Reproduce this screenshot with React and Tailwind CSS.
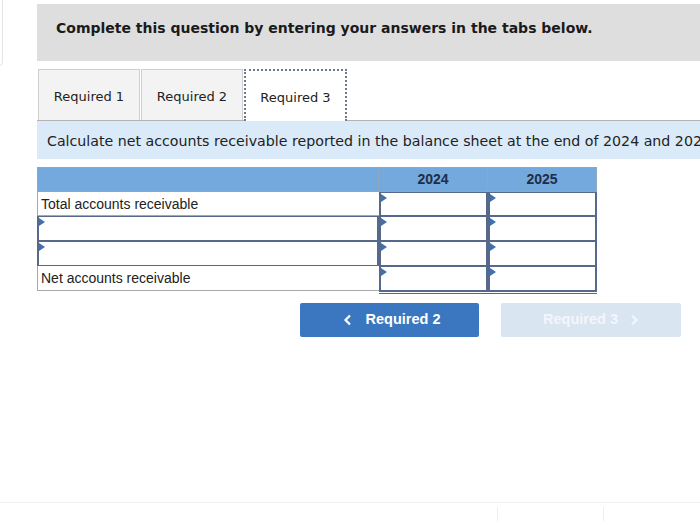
import React from "react";

const Marker = () => (
  <span className="absolute left-0 top-[1px] w-0 h-0 border-t-[4px] border-b-[4px] border-l-[6px] border-t-transparent border-b-transparent border-l-[#3f71b0]" />
);

const InputCell = ({ w }) => (
  <div className={`relative h-full ${w} border-x-2 border-y-[1.5px] border-[#56698a] bg-white`}>
    <Marker />
  </div>
);

export default function App() {
  const sans = { fontFamily: '"DejaVu Sans", Verdana, sans-serif' };
  const arial = { fontFamily: '"Liberation Sans", Arial, sans-serif' };
  return (
    <div className="relative w-[700px] h-[523px] bg-white overflow-hidden">
      <div className="absolute left-[-6px] top-[-6px] w-[9px] h-[72px] border border-[#e4e4e4] rounded-[4px]" />
      <div className="absolute left-0 right-0 top-[502px] border-t border-[#f3f3f3]" />
      <div className="absolute left-[497px] top-[507px] h-[14px] border-l border-[#eeeeee]" />
      <div className="absolute left-[603px] top-[507px] h-[14px] border-l border-[#eeeeee]" />

      <div className="pl-[37px] pt-[4px]">
        <div className="h-[57px] bg-[#dedede] flex items-center pl-[19px] pb-[9px]">
          <span className="text-[14px] font-bold text-[#1a1a1a]" style={sans}>
            Complete this question by entering your answers in the tabs below.
          </span>
        </div>

        <div className="mt-[8px] flex items-end h-[52px] border-b border-[#b3b3b3] pl-[1px] gap-[1px]" style={sans}>
          <div className="w-[102px] h-[51px] bg-[#f3f3f3] border border-b-0 border-[#cfcfcf] flex items-center justify-center pt-[4px] text-[13px] text-[#222]">
            Required 1
          </div>
          <div className="w-[102px] h-[51px] bg-[#f3f3f3] border border-b-0 border-[#cfcfcf] flex items-center justify-center pt-[4px] text-[13px] text-[#222]">
            Required 2
          </div>
          <div className="w-[103px] h-[52px] bg-white border-2 border-b-0 border-dotted border-[#6c7a8c] flex items-center justify-center pt-[3px] text-[13px] text-[#222] mb-[-1px]">
            Required 3
          </div>
        </div>

        <div className="h-[38px] bg-[#dbeaf8] flex items-center pl-[10px] pt-[3px] overflow-hidden whitespace-nowrap">
          <span className="text-[14.2px] text-[#222]" style={sans}>
            Calculate net accounts receivable reported in the balance sheet at the end of 2024 and 2025.
          </span>
        </div>

        <div className="mt-[8px] w-[560px]" style={arial}>
          <div className="flex h-[25px] bg-[#74a9de] border border-[#8fa6c0]">
            <div className="w-[341px] border-r border-[#8fa6c0]" />
            <div className="w-[109px] border-r border-[#8fa6c0] flex items-center justify-center text-[14px] font-bold text-[#1e2d48]">2024</div>
            <div className="flex-1 flex items-center justify-center text-[14px] font-bold text-[#1e2d48]">2025</div>
          </div>

          <div className="flex h-[24px]">
            <div className="w-[342px] border-l border-b border-[#a9a9a9] flex items-center pl-[3px] pt-[1px] text-[14px] text-[#222]">
              Total accounts receivable
            </div>
            <InputCell w="w-[109px]" />
            <InputCell w="w-[109px]" />
          </div>
          <div className="flex h-[25px]">
            <InputCell w="w-[342px]" />
            <InputCell w="w-[109px]" />
            <InputCell w="w-[109px]" />
          </div>
          <div className="flex h-[25px]">
            <InputCell w="w-[342px]" />
            <InputCell w="w-[109px]" />
            <InputCell w="w-[109px]" />
          </div>
          <div className="flex h-[25px]">
            <div className="w-[342px] border-l border-b border-[#a9a9a9] flex items-center pl-[3px] pt-[1px] text-[14px] text-[#222]">
              Net accounts receivable
            </div>
            <InputCell w="w-[109px]" />
            <InputCell w="w-[109px]" />
          </div>
          <div className="ml-[342px] w-[218px] h-[3px] border-t border-b border-[#56698a]" />
        </div>

        <div className="mt-[9px] flex pl-[263px] gap-[22px]" style={arial}>
          <div className="w-[179px] h-[34px] rounded-[2px] bg-[#3a77c0] flex items-center justify-center gap-[14px] pl-[4px] text-white text-[14.5px] font-bold">
            <svg width="9" height="12" viewBox="0 0 9 12"><path d="M7 1.5 L2.5 6 L7 10.5" fill="none" stroke="white" strokeWidth="2.2" /></svg>
            <span>Required 2</span>
          </div>
          <div className="w-[180px] h-[34px] rounded-[2px] bg-[#dae5f2] flex items-center justify-center gap-[12px] text-[#f3f6fb] text-[14.5px] font-bold">
            <span>Required 3</span>
            <svg width="9" height="12" viewBox="0 0 9 12"><path d="M2 1.5 L6.5 6 L2 10.5" fill="none" stroke="#f3f6fb" strokeWidth="2.2" /></svg>
          </div>
        </div>
      </div>
    </div>
  );
}
